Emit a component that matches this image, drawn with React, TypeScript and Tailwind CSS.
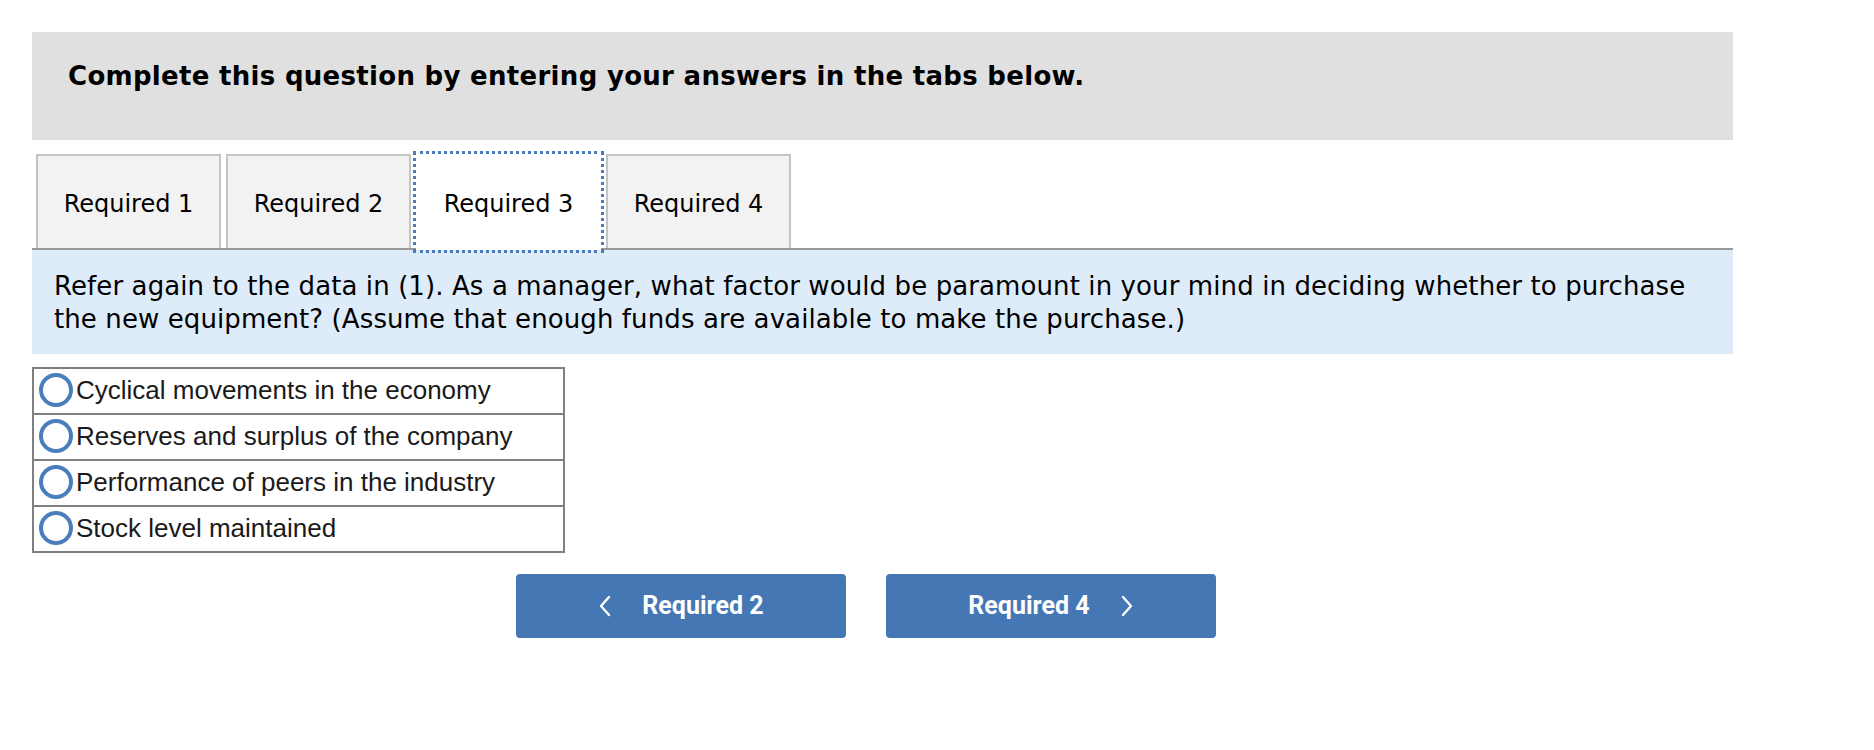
import React from "react";

const tabs = ["Required 1", "Required 2", "Required 3", "Required 4"];
const answers = [
  "Cyclical movements in the economy",
  "Reserves and surplus of the company",
  "Performance of peers in the industry",
  "Stock level maintained",
];

function Chevron({ dir }: { dir: "left" | "right" }) {
  return (
    <svg width="14" height="22" viewBox="0 0 14 22" fill="none">
      <polyline
        points={dir === "left" ? "11,2 3,11 11,20" : "3,2 11,11 3,20"}
        stroke="white"
        strokeWidth="2.4"
        strokeLinecap="round"
        strokeLinejoin="round"
      />
    </svg>
  );
}

export default function App() {
  const active = 2;

  return (
    <div className="min-h-[750px] w-full bg-white pl-[32px] pt-[32px]">
      <div className="w-[1701px]">
        {/* Header */}
        <div className="h-[108px] bg-[#e0e0e0] pl-[36px] pt-[29px]">
          <h1 className="font-['DejaVu_Sans',sans-serif] text-[26px] font-bold leading-[31px] tracking-[0.3px] text-black">
            Complete this question by entering your answers in the tabs below.
          </h1>
        </div>

        {/* Tabs */}
        <div className="mt-[13px] flex h-[97px] items-start gap-[5px] border-b-2 border-[#999999] pl-[4px]">
          {tabs.map((t, i) =>
            i === active ? (
              <div
                key={t}
                className="mt-[1px] flex h-[96px] w-[185px] items-center justify-center bg-white pt-[4px] font-['DejaVu_Sans',sans-serif] text-[24px] text-black outline-[3px] outline-dotted outline-[#4b7bbf]"
              >
                {t}
              </div>
            ) : (
              <div
                key={t}
                className="mt-[1px] flex h-[94px] w-[185px] items-center justify-center border-2 border-b-0 border-[#c4c4c4] bg-[#f2f2f2] pt-[4px] font-['DejaVu_Sans',sans-serif] text-[24px] text-black"
              >
                {t}
              </div>
            )
          )}
        </div>

        {/* Question */}
        <div className="h-[104px] bg-[#deebf8] pl-[22px] pr-[16px] pt-[20px]">
          <p className="font-['DejaVu_Sans',sans-serif] text-[26px] leading-[33px] tracking-[0.1px] text-black">
            Refer again to the data in (1). As a manager, what factor would be paramount in your mind in deciding whether to purchase the new equipment? (Assume that enough funds are available to make the purchase.)
          </p>
        </div>

        {/* Answers */}
        <div className="mt-[13px] w-[533px] border-2 border-[#808080]">
          {answers.map((a, i) => (
            <label
              key={a}
              className={`flex cursor-pointer items-center pb-[2px] ${i > 0 ? "h-[46px] border-t-2 border-[#808080]" : "h-[44px]"}`}
            >
              <span className="ml-[5px] mr-[3px] h-[34px] w-[34px] shrink-0 rounded-full border-[4px] border-[#4a7dbb] bg-white" />
              <span className="font-['Liberation_Sans',Arial,sans-serif] text-[26px] leading-[30px] text-[#1a1a1a]">
                {a}
              </span>
            </label>
          ))}
        </div>

        {/* Nav buttons */}
        <div className="mt-[21px] flex gap-[40px] pl-[484px]">
          <button className="flex h-[64px] w-[330px] items-center justify-center gap-[30px] rounded-[4px] bg-[#4677b5] font-['Roboto',sans-serif] text-[25px] font-bold text-white">
            <Chevron dir="left" />
            <span>Required 2</span>
          </button>
          <button className="flex h-[64px] w-[330px] items-center justify-center gap-[30px] rounded-[4px] bg-[#4677b5] font-['Roboto',sans-serif] text-[25px] font-bold text-white">
            <span>Required 4</span>
            <Chevron dir="right" />
          </button>
        </div>
      </div>
    </div>
  );
}
